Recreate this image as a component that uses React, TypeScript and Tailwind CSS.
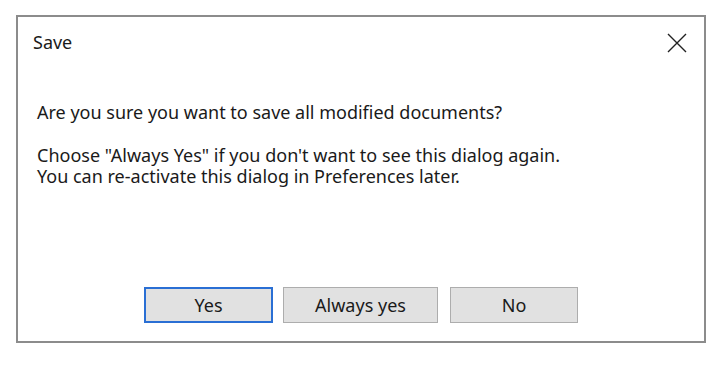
export default function App() {
  return (
    <div className="h-[368px] w-[728px] bg-white pl-4 pt-[15px] font-['Noto_Sans','Liberation_Sans',sans-serif] text-[#1a1a1a]">
      <div className="flex h-[328px] w-[690px] flex-col border-2 border-[#8c8c8c] bg-white">
        {/* title bar */}
        <div className="flex h-[54px] items-start justify-between pl-[15px] pr-[17px] pt-[13px]">
          <span className="text-[18px] leading-[24px]">Save</span>
          <svg width="20" height="20" viewBox="0 0 20 20" className="mt-[3px] text-[#222]">
            <path d="M1 1L19 19M19 1L1 19" stroke="currentColor" strokeWidth="1.4" fill="none" />
          </svg>
        </div>

        {/* message */}
        <div className="mt-[31px] pl-[19px] text-[18px] leading-[21px]">
          <p>Are you sure you want to save all modified documents?</p>
          <p className="mt-[22px]">
            Choose "Always Yes" if you don't want to see this dialog again.
            <br />
            You can re-activate this dialog in Preferences later.
          </p>
        </div>

        {/* buttons */}
        <div className="mt-auto mb-[18px] flex gap-[10px] pl-[126px]">
          <button className="h-[36px] w-[129px] border-2 border-[#2a6fd4] bg-[#e1e1e1] text-[18px]">Yes</button>
          <button className="h-[36px] w-[155px] border border-[#adadad] bg-[#e1e1e1] text-[18px]">Always yes</button>
          <button className="ml-[2px] h-[36px] w-[128px] border border-[#adadad] bg-[#e1e1e1] text-[18px]">No</button>
        </div>
      </div>
    </div>
  )
}
